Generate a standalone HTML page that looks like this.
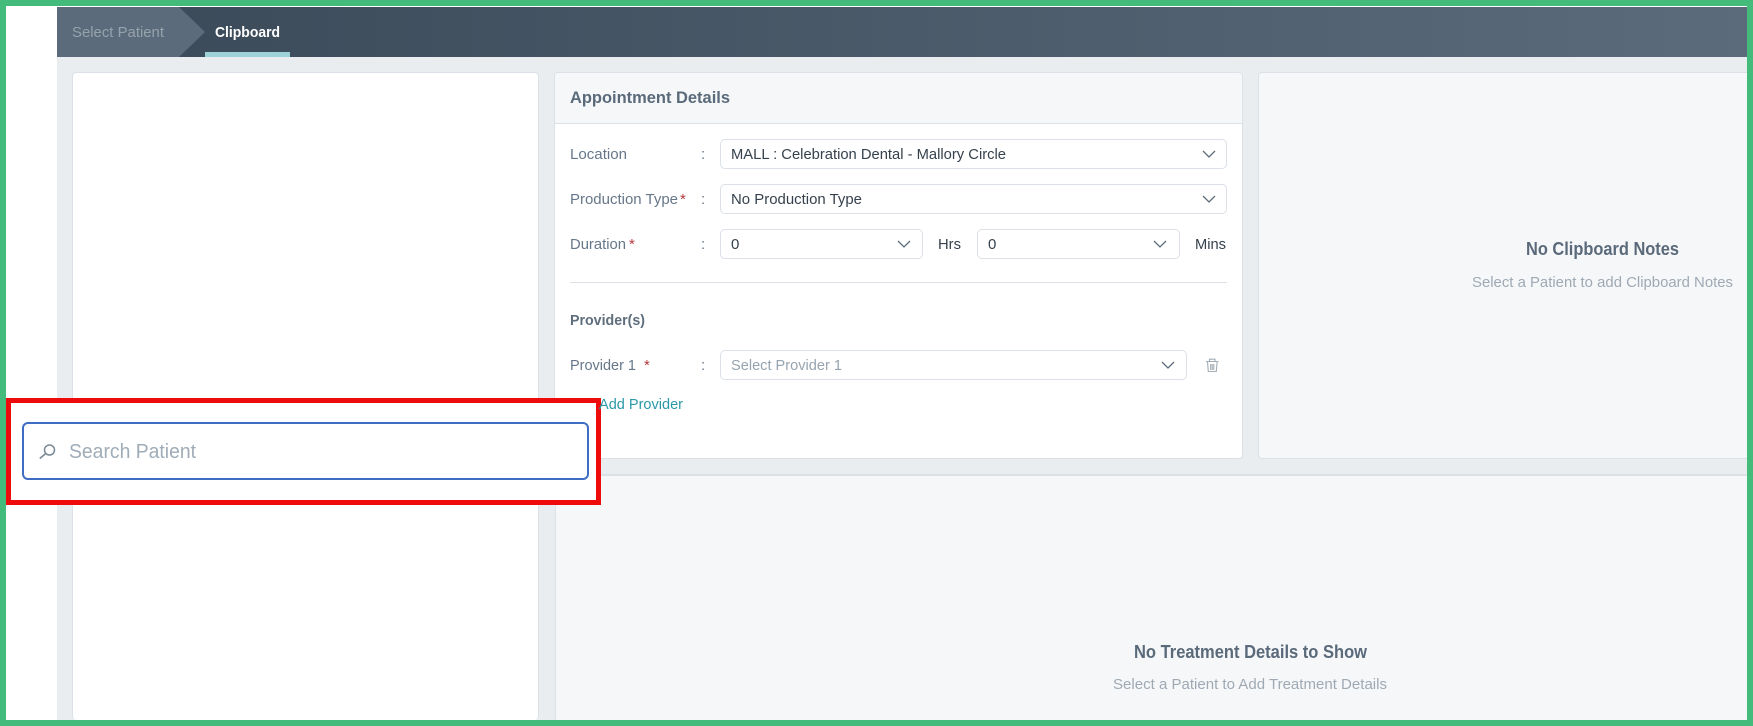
<!DOCTYPE html>
<html><head><meta charset="utf-8"><style>
html,body{margin:0;padding:0;width:1753px;height:726px;overflow:hidden;background:#fff}
#w{position:absolute;left:0;top:0;width:1753px;height:726px;overflow:hidden}
#w div{position:absolute;box-sizing:border-box}
.sel{background:#fff;border:1px solid #dbe1e7;border-radius:5px;height:30px}
.p{border:1px solid #dbe1e7;border-radius:4px}
svg{position:absolute;left:0;top:0}
text{font-family:"Liberation Sans",sans-serif;font-size:15px}
.l{fill:#66778a}.v{fill:#35414d}.s{fill:#b5383c}.c{fill:none;stroke:#5d6d7c;stroke-width:1.300}
.b{filter:blur(.3px)}
</style></head><body><div id="w">
<div style="left:57px;top:7px;width:1690px;height:713px;background:#e9edf0"></div>
<div style="left:57px;top:7px;width:1690px;height:50px;background:linear-gradient(90deg,#394958,#5b6b7b)"></div>
<div style="left:205px;top:52px;width:85px;height:5px;background:#9dd2d9"></div>
<div class="p" style="left:72px;top:72px;width:467px;height:648px;background:#fff;border-bottom:none"></div>
<div class="p" style="left:554px;top:72px;width:689px;height:387px;background:#fff"></div>
<div style="left:555px;top:73px;width:687px;height:51px;background:#f6f7f9;border-bottom:1px solid #dbe1e7;border-radius:4px 4px 0 0"></div>
<div class="p" style="left:1258px;top:72px;width:489px;height:387px;background:#f6f7f9;border-right:none;border-radius:4px 0 0 4px"></div>
<div style="left:555px;top:474px;width:1192px;height:246px;background:#f6f7f9;border-top:2px solid #dbe1e7;border-left:1px solid #dbe1e7"></div>
<div class="sel" style="left:720px;top:139px;width:507px"></div>
<div class="sel" style="left:720px;top:184px;width:507px"></div>
<div class="sel" style="left:720px;top:229px;width:203px"></div>
<div class="sel" style="left:977px;top:229px;width:203px"></div>
<div style="left:570px;top:282px;width:657px;height:1px;background:#dbe1e7"></div>
<div class="sel" style="left:720px;top:350px;width:467px"></div>
<div style="left:6px;top:398px;width:595px;height:107px;background:#fff;border:5px solid #ee0b0b"></div>
<div class="b" style="left:22px;top:422px;width:567px;height:58px;background:#fff;border:2px solid #3f6dc4;border-radius:6px"></div>
<div style="left:0;top:0;width:1753px;height:726px;border:solid #43bb7a;border-width:6px"></div>
<svg width="1753" height="726" viewBox="0 0 1753 726">
<polygon points="57,7 179,7 205,32 179,57 57,57" fill="#5c6b7b"/>
<text x="72" y="37" textLength="92" lengthAdjust="spacingAndGlyphs" fill="#96a2ac">Select Patient</text>
<text x="215" y="37" textLength="65" lengthAdjust="spacingAndGlyphs" fill="#fff" font-weight="bold">Clipboard</text>
<text x="570" y="103" textLength="160" lengthAdjust="spacingAndGlyphs" style="font-size:17px" font-weight="bold" fill="#5a6a7a">Appointment Details</text>
<text class="l" x="570" y="159" textLength="57" lengthAdjust="spacingAndGlyphs">Location</text>
<text class="l" x="570" y="204" textLength="108" lengthAdjust="spacingAndGlyphs">Production Type</text>
<text class="s" x="680" y="204">*</text>
<text class="l" x="570" y="249" textLength="56" lengthAdjust="spacingAndGlyphs">Duration</text>
<text class="s" x="629" y="249">*</text>
<text class="l" x="701" y="159">:</text><text class="l" x="701" y="204">:</text><text class="l" x="701" y="249">:</text><text class="l" x="701" y="370">:</text>
<text class="v" x="731" y="159" textLength="275" lengthAdjust="spacingAndGlyphs">MALL : Celebration Dental - Mallory Circle</text>
<text class="v" x="731" y="204" textLength="131" lengthAdjust="spacingAndGlyphs">No Production Type</text>
<text class="v" x="731" y="249">0</text>
<text class="v" x="988" y="249">0</text>
<text class="v" x="938" y="249" textLength="23" lengthAdjust="spacingAndGlyphs">Hrs</text>
<text class="v" x="1195" y="249" textLength="31" lengthAdjust="spacingAndGlyphs">Mins</text>
<text x="570" y="325" textLength="75" lengthAdjust="spacingAndGlyphs" font-weight="bold" fill="#5f6e7d">Provider(s)</text>
<text class="l" x="570" y="370" textLength="66" lengthAdjust="spacingAndGlyphs">Provider 1</text>
<text class="s" x="644" y="370">*</text>
<text x="731" y="370" textLength="111" lengthAdjust="spacingAndGlyphs" fill="#97a4b0">Select Provider 1</text>
<text x="599" y="409" textLength="84" lengthAdjust="spacingAndGlyphs" fill="#2b99a8">Add Provider</text>
<text class="b" x="69" y="458" textLength="127" lengthAdjust="spacingAndGlyphs" style="font-size:20px" fill="#9facb7">Search Patient</text>
<text x="1526" y="255" textLength="153" lengthAdjust="spacingAndGlyphs" style="font-size:18px" font-weight="bold" fill="#5a6a7a">No Clipboard Notes</text>
<text x="1472" y="287" textLength="261" lengthAdjust="spacingAndGlyphs" fill="#9ea9b4">Select a Patient to add Clipboard Notes</text>
<text x="1134" y="658" textLength="233" lengthAdjust="spacingAndGlyphs" style="font-size:18px" font-weight="bold" fill="#5a6a7a">No Treatment Details to Show</text>
<text x="1113" y="689" textLength="274" lengthAdjust="spacingAndGlyphs" fill="#9ea9b4">Select a Patient to Add Treatment Details</text>
<path class="c" d="M1203 151l6 6 6-6"/>
<path class="c" d="M1203 196l6 6 6-6"/>
<path class="c" d="M898 241l6 6 6-6"/>
<path class="c" d="M1154 241l6 6 6-6"/>
<path class="c" d="M1162 362l6 6 6-6"/>
<path d="M1206 361.500h12.500M1209.500 361v-1.800h5.500v1.800M1207.500 362l.8 9.500h8l.8-9.500M1210.700 364v6M1212.250 364v6M1213.800 364v6" fill="none" stroke="#a3adb6" stroke-width="1.100"/>
<g class="b"><circle cx="49.500" cy="450" r="5" fill="none" stroke="#7b8a96" stroke-width="1.500"/>
<path d="M45.800 453.500l-6 5" fill="none" stroke="#7b8a96" stroke-width="1.600"/></g>
</svg>
</div></body></html>
